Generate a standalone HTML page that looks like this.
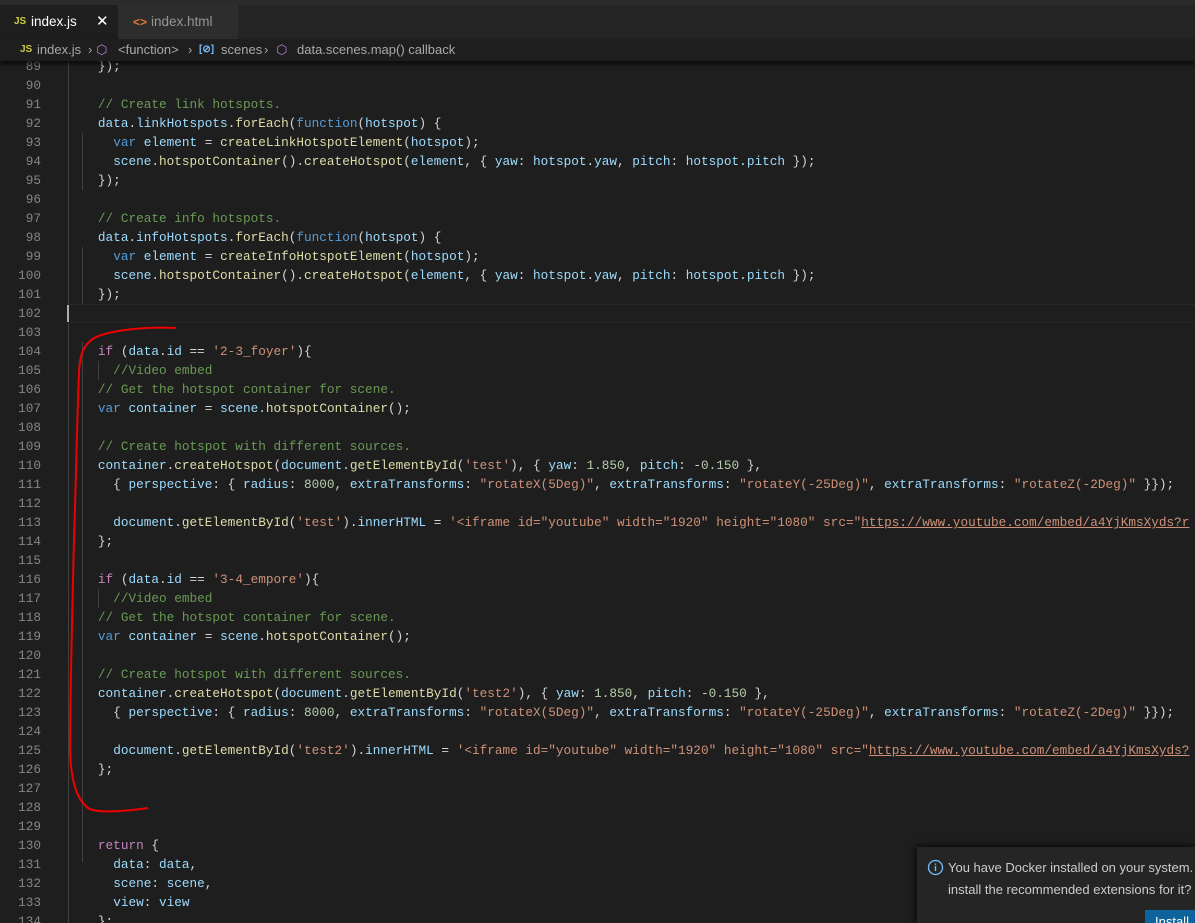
<!DOCTYPE html>
<html style="overflow:hidden;width:1195px;height:923px"><head><meta charset="utf-8"><style>
*{margin:0;padding:0;box-sizing:border-box}
body{width:1195px;height:923px;background:#1e1e1e;overflow:hidden;position:relative;font-family:"Liberation Sans",sans-serif}
.top{position:absolute;left:0;top:0;width:1195px;height:5px;background:#2b2b2b}
.tabs{position:absolute;left:0;top:5px;width:1195px;height:34px;background:#252526}
.tab{position:absolute;top:0;height:34px;font-size:13.5px;line-height:34px}
.t1{left:0;width:118px;background:#1e1e1e;color:#fff}
.t2{left:118px;width:120px;background:#2d2d2d;color:#969696}
.bc{position:absolute;left:0;top:39px;width:1195px;height:22px;background:#1e1e1e;color:#a9a9a9;font-size:13px;line-height:22px;box-shadow:0 3px 4px #000a;z-index:2}
.code{position:absolute;left:0;top:57px;width:1195px;height:866px;overflow:hidden;font-family:"Liberation Mono",monospace;font-size:12.72px;line-height:19px;color:#d4d4d4}
.ln{position:absolute;left:0;width:41px;text-align:right;color:#858585}
.tx{position:absolute;left:67.4px;white-space:pre}
.k{color:#569cd6}.c{color:#c586c0}.v{color:#9cdcfe}.f{color:#dcdcaa}.s{color:#ce9178}.n{color:#b5cea8}.m{color:#6a9955}.u{text-decoration:underline}
.g{position:absolute;width:1px;background:#404040}
.note{position:absolute;left:917px;top:847px;width:278px;height:76px;overflow:hidden;background:#252526;box-shadow:0 0 8px #000;color:#ccc;font-size:13px;z-index:3}
</style></head><body>
<div class="top"></div>
<div class="tabs">
<div class="tab t1"><span style="position:absolute;left:14px;color:#cbcb41;font-size:10px;font-weight:bold">JS</span><span style="position:absolute;left:31px">index.js</span><span style="position:absolute;left:96px;font-size:15px">✕</span></div>
<div class="tab t2"><span style="position:absolute;left:15px;color:#e37933;font-size:12px;font-weight:bold">&lt;&gt;</span><span style="position:absolute;left:33px">index.html</span></div>
</div>
<div class="bc"><span style="position:absolute;left:20px;color:#cbcb41;font-size:10px;font-weight:bold">JS</span><span style="position:absolute;left:37px">index.js</span><span style="position:absolute;left:88px">›</span>
<span style="position:absolute;left:96px;color:#b180d7">⬡</span><span style="position:absolute;left:118px">&lt;function&gt;</span><span style="position:absolute;left:188px">›</span>
<span style="position:absolute;left:199px;color:#75beff;font-size:10px;font-weight:bold">[⊘]</span><span style="position:absolute;left:221px">scenes</span><span style="position:absolute;left:264px">›</span>
<span style="position:absolute;left:276px;color:#b180d7">⬡</span><span style="position:absolute;left:297px">data.scenes.map() callback</span></div>

<div class="g" style="left:68px;top:57px;height:866px"></div>
<div class="g" style="left:82px;top:133px;height:57px"></div>
<div class="g" style="left:82px;top:247px;height:57px"></div>
<div class="g" style="left:82px;top:342px;height:520px"></div>
<div class="g" style="left:98px;top:361px;height:19px"></div>
<div class="g" style="left:98px;top:589px;height:19px"></div>
<div style="position:absolute;left:68px;top:304px;width:1127px;height:19px;border-top:1px solid #282828;border-bottom:1px solid #282828"></div>
<div style="position:absolute;left:67px;top:305px;width:2px;height:17px;background:#aeafad"></div>

<div class="code">
<div class="ln" style="top:0">89</div><div class="tx" style="top:0">    });</div>
<div class="ln" style="top:19px">90</div>
<div class="ln" style="top:38px">91</div><div class="tx m" style="top:38px">    // Create link hotspots.</div>
<div class="ln" style="top:57px">92</div><div class="tx" style="top:57px">    <span class="v">data</span>.<span class="v">linkHotspots</span>.<span class="f">forEach</span>(<span class="k">function</span>(<span class="v">hotspot</span>) {</div>
<div class="ln" style="top:76px">93</div><div class="tx" style="top:76px">      <span class="k">var</span> <span class="v">element</span> = <span class="f">createLinkHotspotElement</span>(<span class="v">hotspot</span>);</div>
<div class="ln" style="top:95px">94</div><div class="tx" style="top:95px">      <span class="v">scene</span>.<span class="f">hotspotContainer</span>().<span class="f">createHotspot</span>(<span class="v">element</span>, { <span class="v">yaw</span>: <span class="v">hotspot</span>.<span class="v">yaw</span>, <span class="v">pitch</span>: <span class="v">hotspot</span>.<span class="v">pitch</span> });</div>
<div class="ln" style="top:114px">95</div><div class="tx" style="top:114px">    });</div>
<div class="ln" style="top:133px">96</div>
<div class="ln" style="top:152px">97</div><div class="tx m" style="top:152px">    // Create info hotspots.</div>
<div class="ln" style="top:171px">98</div><div class="tx" style="top:171px">    <span class="v">data</span>.<span class="v">infoHotspots</span>.<span class="f">forEach</span>(<span class="k">function</span>(<span class="v">hotspot</span>) {</div>
<div class="ln" style="top:190px">99</div><div class="tx" style="top:190px">      <span class="k">var</span> <span class="v">element</span> = <span class="f">createInfoHotspotElement</span>(<span class="v">hotspot</span>);</div>
<div class="ln" style="top:209px">100</div><div class="tx" style="top:209px">      <span class="v">scene</span>.<span class="f">hotspotContainer</span>().<span class="f">createHotspot</span>(<span class="v">element</span>, { <span class="v">yaw</span>: <span class="v">hotspot</span>.<span class="v">yaw</span>, <span class="v">pitch</span>: <span class="v">hotspot</span>.<span class="v">pitch</span> });</div>
<div class="ln" style="top:228px">101</div><div class="tx" style="top:228px">    });</div>
<div class="ln" style="top:247px">102</div>
<div class="ln" style="top:266px">103</div>
<div class="ln" style="top:285px">104</div><div class="tx" style="top:285px">    <span class="c">if</span> (<span class="v">data</span>.<span class="v">id</span> == <span class="s">'2-3_foyer'</span>){</div>
<div class="ln" style="top:304px">105</div><div class="tx m" style="top:304px">      //Video embed</div>
<div class="ln" style="top:323px">106</div><div class="tx m" style="top:323px">    // Get the hotspot container for scene.</div>
<div class="ln" style="top:342px">107</div><div class="tx" style="top:342px">    <span class="k">var</span> <span class="v">container</span> = <span class="v">scene</span>.<span class="f">hotspotContainer</span>();</div>
<div class="ln" style="top:361px">108</div>
<div class="ln" style="top:380px">109</div><div class="tx m" style="top:380px">    // Create hotspot with different sources.</div>
<div class="ln" style="top:399px">110</div><div class="tx" style="top:399px">    <span class="v">container</span>.<span class="f">createHotspot</span>(<span class="v">document</span>.<span class="f">getElementById</span>(<span class="s">'test'</span>), { <span class="v">yaw</span>: <span class="n">1.850</span>, <span class="v">pitch</span>: -<span class="n">0.150</span> },</div>
<div class="ln" style="top:418px">111</div><div class="tx" style="top:418px">      { <span class="v">perspective</span>: { <span class="v">radius</span>: <span class="n">8000</span>, <span class="v">extraTransforms</span>: <span class="s">"rotateX(5Deg)"</span>, <span class="v">extraTransforms</span>: <span class="s">"rotateY(-25Deg)"</span>, <span class="v">extraTransforms</span>: <span class="s">"rotateZ(-2Deg)"</span> }});</div>
<div class="ln" style="top:437px">112</div>
<div class="ln" style="top:456px">113</div><div class="tx" style="top:456px">      <span class="v">document</span>.<span class="f">getElementById</span>(<span class="s">'test'</span>).<span class="v">innerHTML</span> = <span class="s">'&lt;iframe id="youtube" width="1920" height="1080" src="<span class="u">https://www.youtube.com/embed/a4YjKmsXyds?r</span></span></div>
<div class="ln" style="top:475px">114</div><div class="tx" style="top:475px">    };</div>
<div class="ln" style="top:494px">115</div>
<div class="ln" style="top:513px">116</div><div class="tx" style="top:513px">    <span class="c">if</span> (<span class="v">data</span>.<span class="v">id</span> == <span class="s">'3-4_empore'</span>){</div>
<div class="ln" style="top:532px">117</div><div class="tx m" style="top:532px">      //Video embed</div>
<div class="ln" style="top:551px">118</div><div class="tx m" style="top:551px">    // Get the hotspot container for scene.</div>
<div class="ln" style="top:570px">119</div><div class="tx" style="top:570px">    <span class="k">var</span> <span class="v">container</span> = <span class="v">scene</span>.<span class="f">hotspotContainer</span>();</div>
<div class="ln" style="top:589px">120</div>
<div class="ln" style="top:608px">121</div><div class="tx m" style="top:608px">    // Create hotspot with different sources.</div>
<div class="ln" style="top:627px">122</div><div class="tx" style="top:627px">    <span class="v">container</span>.<span class="f">createHotspot</span>(<span class="v">document</span>.<span class="f">getElementById</span>(<span class="s">'test2'</span>), { <span class="v">yaw</span>: <span class="n">1.850</span>, <span class="v">pitch</span>: -<span class="n">0.150</span> },</div>
<div class="ln" style="top:646px">123</div><div class="tx" style="top:646px">      { <span class="v">perspective</span>: { <span class="v">radius</span>: <span class="n">8000</span>, <span class="v">extraTransforms</span>: <span class="s">"rotateX(5Deg)"</span>, <span class="v">extraTransforms</span>: <span class="s">"rotateY(-25Deg)"</span>, <span class="v">extraTransforms</span>: <span class="s">"rotateZ(-2Deg)"</span> }});</div>
<div class="ln" style="top:665px">124</div>
<div class="ln" style="top:684px">125</div><div class="tx" style="top:684px">      <span class="v">document</span>.<span class="f">getElementById</span>(<span class="s">'test2'</span>).<span class="v">innerHTML</span> = <span class="s">'&lt;iframe id="youtube" width="1920" height="1080" src="<span class="u">https://www.youtube.com/embed/a4YjKmsXyds?</span></span></div>
<div class="ln" style="top:703px">126</div><div class="tx" style="top:703px">    };</div>
<div class="ln" style="top:722px">127</div>
<div class="ln" style="top:741px">128</div>
<div class="ln" style="top:760px">129</div>
<div class="ln" style="top:779px">130</div><div class="tx" style="top:779px">    <span class="c">return</span> {</div>
<div class="ln" style="top:798px">131</div><div class="tx" style="top:798px">      <span class="v">data</span>: <span class="v">data</span>,</div>
<div class="ln" style="top:817px">132</div><div class="tx" style="top:817px">      <span class="v">scene</span>: <span class="v">scene</span>,</div>
<div class="ln" style="top:836px">133</div><div class="tx" style="top:836px">      <span class="v">view</span>: <span class="v">view</span></div>
<div class="ln" style="top:855px">134</div><div class="tx" style="top:855px">    };</div>
</div>

<svg style="position:absolute;left:0;top:0" width="1195" height="923"><path d="M176 328 C140 326 105 332 94 338 C82 346 80 356 79 372 C77 420 76 480 74 540 C72 620 70 700 70 750 C71 785 78 800 88 808 C95 813 120 812 148 808" fill="none" stroke="#e00" stroke-width="2"/></svg>

<div class="note">
<svg style="position:absolute;left:10px;top:12px" width="17" height="17" viewBox="0 0 17 17"><circle cx="8.5" cy="8.5" r="7" fill="none" stroke="#75beff" stroke-width="1.3"/><rect x="7.8" y="7" width="1.4" height="5" fill="#75beff"/><rect x="7.8" y="4.5" width="1.4" height="1.4" fill="#75beff"/></svg>
<div style="position:absolute;left:31px;top:13px;white-space:nowrap">You have Docker installed on your system. Do you want to</div>
<div style="position:absolute;left:31px;top:35px;white-space:nowrap">install the recommended extensions for it?</div>
<div style="position:absolute;left:228px;top:63px;width:80px;height:26px;background:#0e639c;color:#fff;padding:4px 10px">Install</div>
</div>
</body></html>
